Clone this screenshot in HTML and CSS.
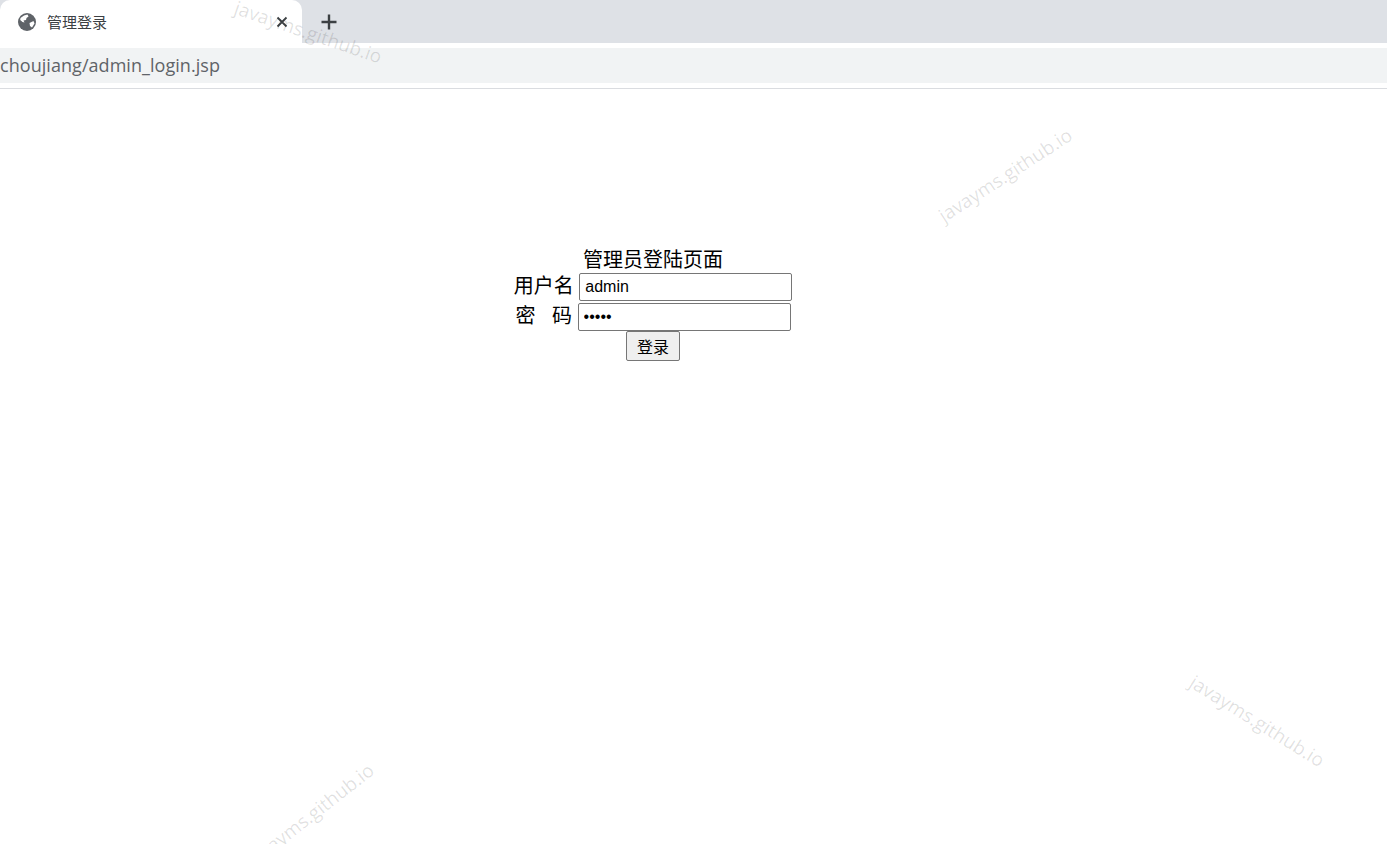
FILE: index.html
```html
<!DOCTYPE html>
<html lang="zh-CN">
<head>
    <meta charset="UTF-8">
    <title>管理登录</title>
    <link rel="stylesheet" href="styles.css">
</head>
<body>
    <div class="tab-strip">
        <div class="tab">
            <svg class="tab-globe" viewBox="0 0 18 18" width="18" height="18">
                <circle cx="9" cy="9" r="9" fill="#5f6368"/>
                <path d="M2.5 5 6 2.5 9.5 1.5 10.5 3.5 8.5 5 8 7 5.5 7.5 6.5 9.5 4.5 9 2.2 7Z" fill="#fff"/>
                <path d="M11.5 10 15.5 8 16.5 10.5 14 14.5 12 13Z" fill="#fff"/>
            </svg>
            <span class="tab-title">管理登录</span>
            <svg class="tab-close" viewBox="0 0 12 12" width="12" height="12">
                <path d="M1.5 1.5 10.5 10.5M10.5 1.5 1.5 10.5" stroke="#3c4043" stroke-width="1.8" fill="none"/>
            </svg>
        </div>
        <svg class="new-tab" viewBox="0 0 16 16" width="16" height="16">
            <path d="M8 0.5V15.5M0.5 8H15.5" stroke="#3c4043" stroke-width="2.4" fill="none"/>
        </svg>
    </div>
    <div class="address-bar">choujiang/admin_login.jsp</div>
    <div class="toolbar-line"></div>

    <form class="login-form">
        <div class="login-title">管理员登陆页面</div>
        <div class="login-row">用户名 <input type="text" class="login-input" value="admin"></div>
        <div class="login-row">密&nbsp;&nbsp;&nbsp;码 <input type="password" class="login-input" value="admin"></div>
        <div class="login-row login-submit"><input type="button" class="login-button" value="登录"></div>
    </form>

    <!-- watermark -->
    <span class="watermark wm-tab">javayms.github.io</span>
    <span class="watermark wm-right">javayms.github.io</span>
    <span class="watermark wm-bottom-right">javayms.github.io</span>
    <span class="watermark wm-bottom-left">javayms.github.io</span>
</body>
</html>
```

FILE: styles.css
```css
html,
body {
    height: 100%;
}

body {
    margin: 0;
    position: relative;
    overflow: hidden;
    background: #fff;
    color: #000;
    font-family: "Liberation Sans", "Noto Sans CJK SC", sans-serif;
}

.tab-strip {
    display: flex;
    align-items: center;
    height: 43px;
    margin-bottom: 5px;
    background: #dee1e6;
}

.tab {
    display: flex;
    align-items: center;
    box-sizing: border-box;
    width: 302px;
    height: 48px;
    margin-top: 5px;
    padding: 0 14px 5px 18px;
    background: #fff;
    border-radius: 10px 10px 0 0;
}

.tab-title {
    flex: 1;
    margin-left: 11px;
    font-family: "Noto Sans CJK SC", sans-serif;
    font-size: 15px;
    color: #3c4043;
}

.new-tab {
    margin-left: 19px;
}

.address-bar {
    height: 35px;
    line-height: 35px;
    background: #f1f3f4;
    font-family: "Open Sans", sans-serif;
    font-size: 18px;
    letter-spacing: 0.05px;
    color: #5f6368;
}

.toolbar-line {
    height: 1px;
    margin-top: 5px;
    background: #dadce0;
}

.login-form {
    width: 1306px;
    padding-top: 161px;
    font-size: 20px;
    text-align: center;
}

.login-title {
    height: 20px;
    line-height: 20px;
}

.login-row {
    height: 30px;
}

.login-submit {
    margin-top: 1px;
}

.login-input {
    box-sizing: border-box;
    width: 213px;
    height: 28px;
    padding: 1px 5px;
    border: 1px solid #767676;
    border-radius: 2px;
    vertical-align: 1px;
    font-family: "Liberation Sans", sans-serif;
    font-size: 16px;
}

.login-button {
    box-sizing: border-box;
    width: 54px;
    height: 30px;
    padding: 0;
    border: 1px solid #767676;
    border-radius: 2px;
    background: #efefef;
    font-family: "Liberation Sans", "Noto Sans CJK SC", sans-serif;
    font-size: 16px;
}

.watermark {
    position: absolute;
    font-family: "Open Sans", sans-serif;
    font-size: 19px;
    line-height: 24px;
    white-space: nowrap;
    color: rgba(0, 0, 0, 0.12);
}

.wm-tab {
    left: 231px;
    top: 20px;
    transform: rotate(19deg);
}

.wm-right {
    left: 928px;
    top: 163px;
    transform: rotate(-33deg);
}

.wm-bottom-right {
    left: 1180px;
    top: 709px;
    transform: rotate(32deg);
}

.wm-bottom-left {
    left: 233px;
    top: 803px;
    transform: rotate(-38deg);
}
```
